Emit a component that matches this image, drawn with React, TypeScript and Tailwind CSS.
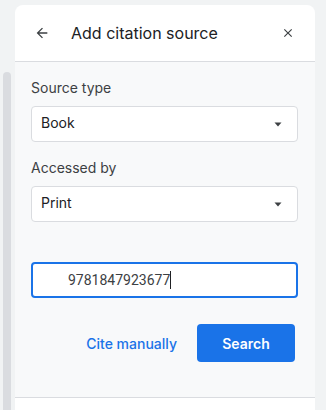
import React from "react";

function Caret() {
  return (
    <svg width="10" height="5" viewBox="0 0 10 5" className="text-[#3c4043]">
      <path d="M1.5 0.5 L8.5 0.5 L5 4.5 Z" fill="currentColor" />
    </svg>
  );
}

function Select({ value }: { value: string }) {
  return (
    <div className="flex items-center justify-between h-[36px] rounded-[4px] border border-[#dadce0] bg-white pl-[9px] pr-[14px]">
      <span className="text-[14px] leading-[18px] text-[#202124] -mt-[2px]">{value}</span>
      <Caret />
    </div>
  );
}

export default function App() {
  return (
    <div
      className="w-[326px] h-[410px] bg-[#f1f3f4] flex pt-[5px] overflow-hidden"
      style={{ fontFamily: "Inter, Roboto, 'Noto Sans', sans-serif" }}
    >
      {/* left gutter with scrollbar thumb */}
      <div className="w-[15px] shrink-0 pl-[3px] pt-[67px]">
        <div className="w-[8px] h-full rounded-t-[4px] bg-[#dadce0]" />
      </div>

      <div className="w-[300px] flex flex-col">
        {/* header */}
        <div className="h-[57px] shrink-0 bg-white rounded-tl-[8px] rounded-tr-[8px] border-b border-[#dadce0] flex items-center pl-[19px] pr-[20px]">
          <svg width="16" height="16" viewBox="0 0 24 24" className="text-[#3c4043]">
            <path d="M20 11H7.83l5.59-5.59L12 4l-8 8 8 8 1.41-1.41L7.83 13H20v-2z" fill="currentColor" />
          </svg>
          <span className="ml-[21px] text-[16px] text-[#202124] flex-1">Add citation source</span>
          <svg width="14" height="14" viewBox="0 0 24 24" className="text-[#3c4043]">
            <path
              d="M19 6.41L17.59 5 12 10.59 6.41 5 5 6.41 10.59 12 5 17.59 6.41 19 12 13.41 17.59 19 19 17.59 13.41 12z"
              fill="currentColor"
            />
          </svg>
        </div>

        {/* body */}
        <div className="h-[336px] shrink-0 bg-[#f8f9fa] pt-[16px] pl-[16px] pr-[17px] border-b border-[#dadce0]">
          <div className="text-[14px] leading-[20px] text-[#3c4043]">Source type</div>
          <div className="mt-[8px]">
            <Select value="Book" />
          </div>
          <div className="mt-[16px] text-[14px] leading-[20px] text-[#3c4043]">Accessed by</div>
          <div className="mt-[8px]">
            <Select value="Print" />
          </div>

          <div className="mt-[40px] h-[36px] rounded-[4px] border-2 border-[#1a73e8] bg-white flex items-center pl-[35px]">
            <span
              className="text-[14px] text-[#3c4043]"
              style={{ fontFamily: "Roboto, 'Noto Sans', sans-serif" }}
            >
              9781847923677
            </span>
            <span className="w-px h-[18px] bg-[#202124]" />
          </div>

          <div className="mt-[26px] flex items-center justify-end pr-[3px] gap-[20px]">
            <span className="text-[14px] font-medium text-[#1a73e8]">Cite manually</span>
            <div className="w-[98px] h-[38px] rounded-[4px] bg-[#1a73e8] flex items-center justify-center text-[14px] font-semibold text-white">
              Search
            </div>
          </div>
        </div>

        <div className="flex-1 bg-white" />
      </div>
    </div>
  );
}
